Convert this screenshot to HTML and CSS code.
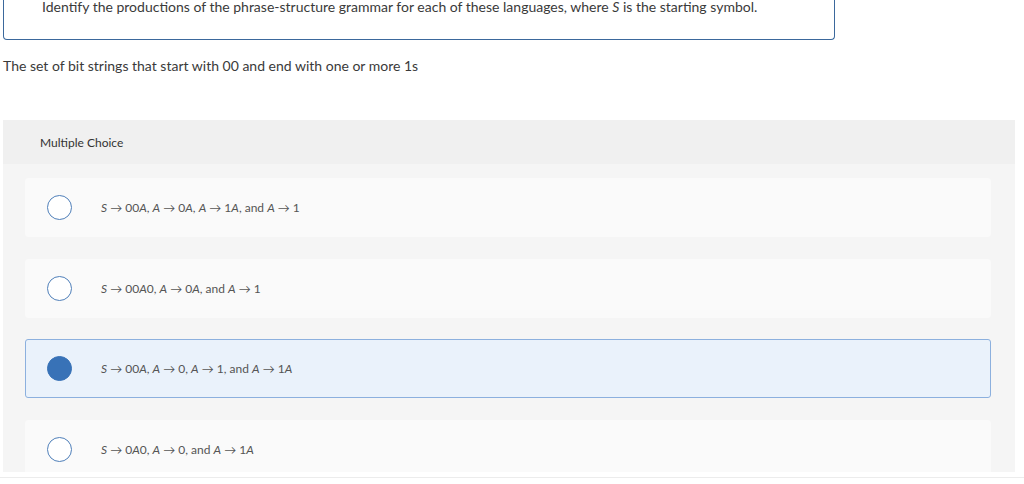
FILE: index.html
```html
<!DOCTYPE html>
<html>
<head>
<meta charset="utf-8">
<link rel="stylesheet" href="styles.css">
</head>
<body>
<div class="prompt-box">
  <p class="prompt-text">Identify the productions of the phrase-structure grammar for each of these languages, where <i>S</i> is the starting symbol.</p>
</div>
<p class="question">The set of bit strings that start with 00 and end with one or more 1s</p>
<section class="panel">
  <div class="panel-head">Multiple Choice</div>
  <div class="panel-body">
    <div class="option">
      <span class="radio"></span>
      <span class="opt-text"><i>S</i> → 00<i>A</i>, <i>A</i> → 0<i>A</i>, <i>A</i> → 1<i>A</i>, and <i>A</i> → 1</span>
    </div>
    <div class="option">
      <span class="radio"></span>
      <span class="opt-text"><i>S</i> → 00<i>A</i>0, <i>A</i> → 0<i>A</i>, and <i>A</i> → 1</span>
    </div>
    <div class="option selected">
      <span class="radio"></span>
      <span class="opt-text"><i>S</i> → 00<i>A</i>, <i>A</i> → 0, <i>A</i> → 1, and <i>A</i> → 1<i>A</i></span>
    </div>
    <div class="option">
      <span class="radio"></span>
      <span class="opt-text"><i>S</i> → 0<i>A</i>0, <i>A</i> → 0, and <i>A</i> → 1<i>A</i></span>
    </div>
  </div>
</section>
<div class="footer-line"></div>
</body>
</html>
```
FILE: styles.css
```css
* { box-sizing: border-box; }
html, body { margin: 0; padding: 0; background: #fff; }
body {
  font-family: Lato, "Open Sans", sans-serif;
  color: #333;
  width: 1024px;
  height: 484px;
  overflow: hidden;
}
.prompt-box {
  margin-left: 3px;
  width: 832px;
  height: 40px;
  border: 1px solid #3b689c;
  border-top: 0;
  border-radius: 0 0 4px 4px;
  padding-left: 38px;
}
.prompt-text {
  margin: 0;
  font-size: 14px;
  line-height: 16px;
  color: #3a3a3a;
  position: relative;
  top: -1px;
}
.question {
  margin: 18px 0 0 3px;
  font-size: 14px;
  line-height: 16px;
  color: #3a3a3a;
}
.panel {
  margin: 46px 0 0 3px;
  width: 1012px;
  height: 352px;
  background: #f5f5f5;
  overflow: hidden;
}
.panel-head {
  height: 44px;
  background: #f0f0f0;
  padding-left: 37px;
  display: flex;
  align-items: center;
  font-size: 12px;
  color: #333;
}
.panel-body {
  padding: 14px 0 0 22px;
  display: flex;
  flex-direction: column;
  gap: 21.5px;
}
.option {
  width: 966px;
  height: 59px;
  flex: 0 0 59px;
  background: #fafafa;
  border-radius: 4px;
  border: 1px solid transparent;
  display: flex;
  align-items: center;
  padding-left: 21px;
}
.option.selected {
  background: #eaf2fb;
  border-color: #8cb0de;
  border-radius: 3px;
}
.radio {
  width: 25px;
  height: 25px;
  border-radius: 50%;
  border: 1px solid #4f7fb9;
  background: #fff;
  flex: 0 0 25px;
}
.selected .radio {
  background: #3872b7;
  border-color: #3872b7;
}
.opt-text {
  margin-left: 29px;
  font-size: 12px;
  color: #555;
  white-space: nowrap;
}
.opt-text i { font-style: italic; }
.footer-line {
  margin-top: 5px;
  height: 1px;
  background: #ececec;
}
```
